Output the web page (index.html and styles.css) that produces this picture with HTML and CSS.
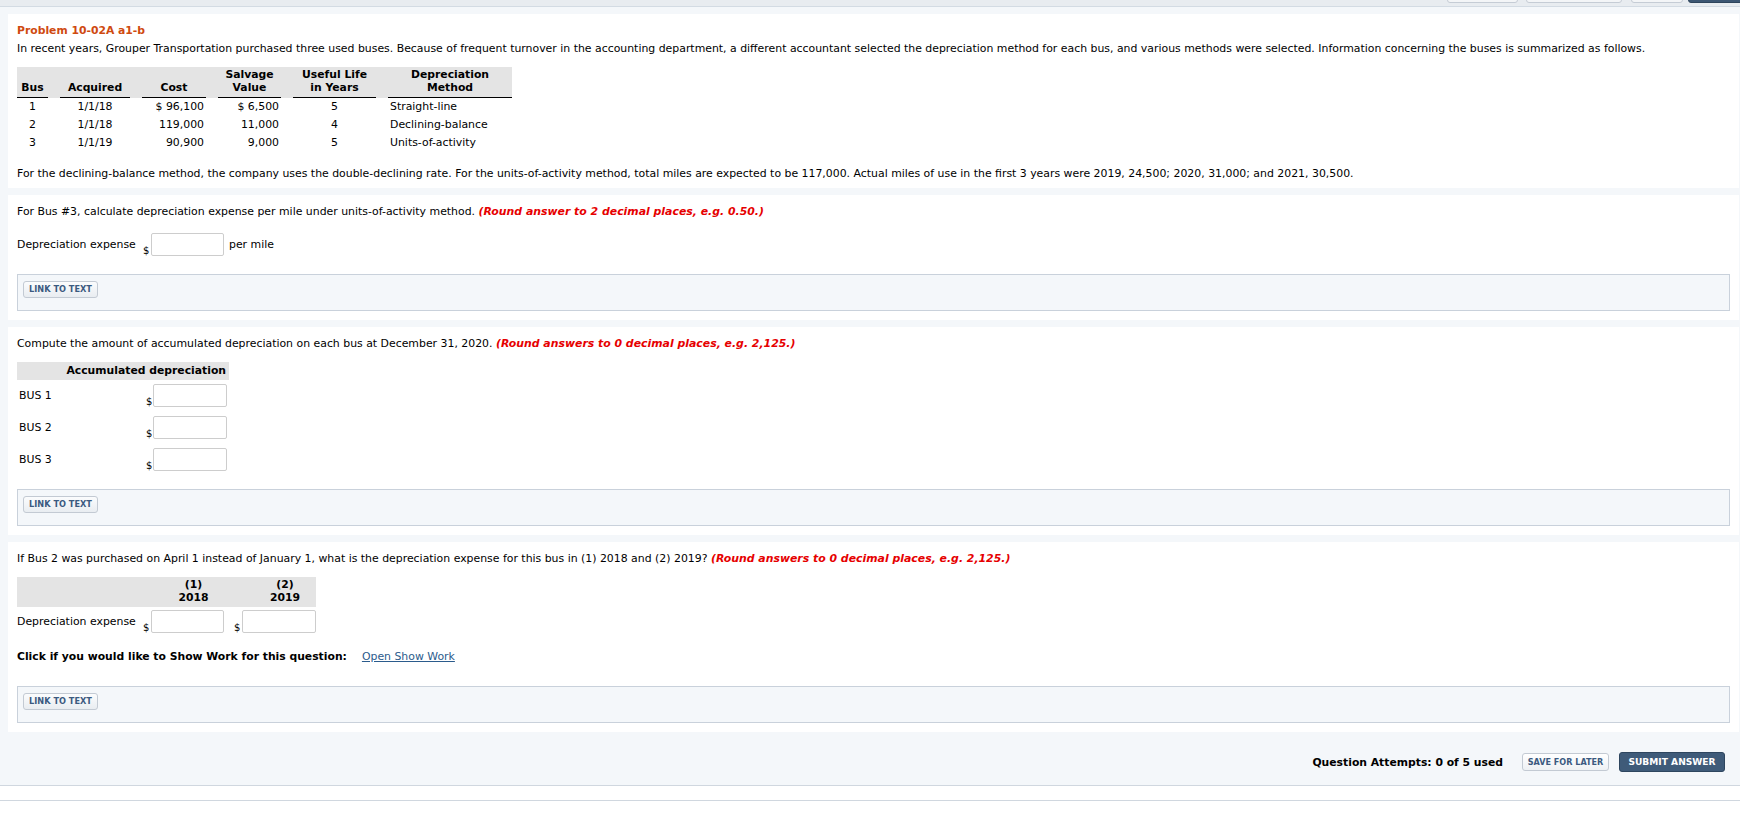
FILE: index.html
```html
<!DOCTYPE html>
<html>
<head>
<meta charset="utf-8">
<title>Problem 10-02A a1-b</title>
<link rel="stylesheet" href="styles.css">
</head>
<body>
<div class="topbar">
  <span class="tb tb1"></span><span class="tb tb2"></span><span class="tb tb3"></span><span class="tb tb4"></span>
</div>
<div class="page">
  <section class="panel p1">
    <div class="title">Problem 10-02A a1-b</div>
    <p class="intro">In recent years, Grouper Transportation purchased three used buses. Because of frequent turnover in the accounting department, a different accountant selected the depreciation method for each bus, and various methods were selected. Information concerning the buses is summarized as follows.</p>
    <div class="buses">
      <div class="bh">
        <div>Bus</div>
        <div>Acquired</div>
        <div>Cost</div>
        <div>Salvage<br>Value</div>
        <div>Useful Life<br>in Years</div>
        <div>Depreciation<br>Method</div>
      </div>
      <div class="br">
        <div class="c">1</div><div class="c">1/1/18</div><div class="r">$ 96,100</div><div class="r">$ 6,500</div><div class="c">5</div><div class="l">Straight-line</div>
      </div>
      <div class="br">
        <div class="c">2</div><div class="c">1/1/18</div><div class="r">119,000</div><div class="r">11,000</div><div class="c">4</div><div class="l">Declining-balance</div>
      </div>
      <div class="br">
        <div class="c">3</div><div class="c">1/1/19</div><div class="r">90,900</div><div class="r">9,000</div><div class="c">5</div><div class="l">Units-of-activity</div>
      </div>
    </div>
    <p class="note">For the declining-balance method, the company uses the double-declining rate. For the units-of-activity method, total miles are expected to be 117,000. Actual miles of use in the first 3 years were 2019, 24,500; 2020, 31,000; and 2021, 30,500.</p>
  </section>

  <section class="panel">
    <p class="q">For Bus #3, calculate depreciation expense per mile under units-of-activity method. <span class="red">(Round answer to 2 decimal places, e.g. 0.50.)</span></p>
    <div class="ansrow">
      <div class="lbl">Depreciation expense</div>
      <span class="cur">$</span><input class="box" type="text">
      <div class="after">per mile</div>
    </div>
    <div class="linkbox"><button class="ltt" type="button">LINK TO TEXT</button></div>
  </section>

  <section class="panel">
    <p class="q">Compute the amount of accumulated depreciation on each bus at December 31, 2020. <span class="red">(Round answers to 0 decimal places, e.g. 2,125.)</span></p>
    <div class="acc">
      <div class="acch">Accumulated depreciation</div>
      <div class="accrow first"><div class="acclbl">BUS 1</div><span class="cur c3">$</span><input class="box b3" type="text"></div>
      <div class="accrow"><div class="acclbl">BUS 2</div><span class="cur c3">$</span><input class="box b3" type="text"></div>
      <div class="accrow"><div class="acclbl">BUS 3</div><span class="cur c3">$</span><input class="box b3" type="text"></div>
    </div>
    <div class="linkbox"><button class="ltt" type="button">LINK TO TEXT</button></div>
  </section>

  <section class="panel p4">
    <p class="q">If Bus 2 was purchased on April 1 instead of January 1, what is the depreciation expense for this bus in (1) 2018 and (2) 2019? <span class="red">(Round answers to 0 decimal places, e.g. 2,125.)</span></p>
    <div class="de">
      <div class="deh">
        <div></div>
        <div>(1)<br>2018</div>
        <div>(2)<br>2019</div>
      </div>
      <div class="derow">
        <div class="lbl">Depreciation expense</div>
        <span class="cur">$</span><input class="box" type="text">
        <span class="cur c2">$</span><input class="box b2" type="text">
      </div>
    </div>
    <p class="show">Click if you would like to Show Work for this question:<a class="sw" href="#">Open Show Work</a></p>
    <div class="linkbox lb4"><button class="ltt" type="button">LINK TO TEXT</button></div>
  </section>

  <div class="footer">
    <span class="attempts">Question Attempts: 0 of 5 used</span>
    <button class="save" type="button">SAVE FOR LATER</button>
    <button class="submit" type="button">SUBMIT ANSWER</button>
  </div>
</div>
<div class="bottom"></div>
</body>
</html>
```
FILE: styles.css
```css
* { box-sizing: border-box; }
html, body { margin: 0; padding: 0; background: #fff; }
body {
  font-family: "DejaVu Sans", Verdana, sans-serif;
  font-size: 10.9px;
  line-height: 13px;
  color: #000;
}
p { margin: 0; }

.topbar {
  height: 7px;
  background: #e8ecf0;
  border-bottom: 1px solid #d3dbe3;
  overflow: hidden;
  display: flex;
  justify-content: flex-end;
}
.tb {
  flex: none;
  height: 20px;
  margin-top: -17px;
  border: 1px solid #c5ccd5;
  border-radius: 3px;
  background: #f3f5f7;
}
.tb1 { width: 71px; margin-right: 8px; }
.tb2 { width: 96px; margin-right: 9px; }
.tb3 { width: 52px; margin-right: 5px; }
.tb4 { width: 60px; margin-right: -8px; background: #3d5773; border-color: #2f455c; }

.page {
  background: #f4f7fa;
  padding: 7px 1px 0 8px;
  border-bottom: 1px solid #d0d7df;
}
.panel {
  background: #fff;
  padding: 10px 9px 9px;
  margin-bottom: 7px;
}
.p1 { padding-bottom: 8px; }
.p4 { margin-bottom: 0; }

.title { font-weight: bold; color: #cf4a10; font-size: 10.8px; }
.intro { margin-top: 5px; }

.buses { margin-top: 12px; width: 495px; }
.bh, .br {
  display: grid;
  grid-template-columns: 31px 70px 64px 63px 83px 124px;
  column-gap: 12px;
}
.bh {
  background: #e4e4e4;
  padding-top: 1px;
  font-weight: bold;
  font-size: 10.8px;
}
.bh > div {
  align-self: end;
  text-align: center;
  padding-bottom: 3px;
  border-bottom: 1px solid #000;
}
.br { line-height: 18px; }
.c { text-align: center; }
.r { text-align: right; padding-right: 2px; }
.l { padding-left: 2px; }
.note { margin-top: 15px; }

.red { color: #e60000; font-weight: bold; font-style: italic; }

.ansrow, .derow {
  display: flex;
  align-items: flex-start;
  height: 23px;
  margin-top: 15px;
}
.lbl { width: 126px; flex: none; padding-top: 5px; }
.cur {
  flex: none;
  width: 8px;
  font-size: 10px;
  line-height: 10px;
  align-self: flex-end;
}
.c2 { margin-left: 10px; }
.box {
  flex: none;
  width: 73px;
  height: 23px;
  margin: 0;
  padding: 0;
  border: 1px solid #cdcdcd;
  border-radius: 2px;
  background: #fff;
  font: inherit;
}
.b2 { width: 74px; }
.after { padding-top: 5px; margin-left: 5px; }

.linkbox {
  margin-top: 18px;
  border: 1px solid #c9d1db;
  background: #f4f7fa;
  padding: 6px 5px 12px;
}
.lb4 { margin-top: 23px; }
.ltt {
  display: block;
  width: 75px;
  height: 17px;
  margin: 0;
  padding: 0;
  border: 1px solid #c3cad3;
  border-radius: 3px;
  background: linear-gradient(#fbfcfd, #e9edf1);
  color: #3b5a80;
  font-family: "DejaVu Sans", Verdana, sans-serif;
  font-weight: bold;
  font-size: 8.2px;
  line-height: 15px;
  text-align: center;
}

.acc { margin-top: 12px; width: 212px; }
.acch {
  height: 18px;
  background: #e4e4e4;
  padding: 2px 3px 3px 0;
  text-align: right;
  font-weight: bold;
  font-size: 10.8px;
}
.accrow {
  display: flex;
  align-items: flex-start;
  height: 23px;
  margin-top: 9px;
}
.accrow.first { margin-top: 4px; }
.acclbl { width: 129px; flex: none; padding: 5px 0 0 2px; }
.c3 { width: 7px; }
.b3 { width: 74px; }

.de { margin-top: 12px; width: 299px; }
.deh {
  display: grid;
  grid-template-columns: 126px 81px 82px;
  column-gap: 10px;
  background: #e4e4e4;
  padding: 1px 0 3px;
  font-weight: bold;
  font-size: 10.8px;
  text-align: center;
}
.derow { margin-top: 3px; }

.show { margin-top: 17px; font-weight: bold; font-size: 10.8px; }
.sw { font-weight: normal; font-size: 10.9px; color: #2b5b8c; text-decoration: underline; margin-left: 15px; }

.footer {
  height: 53px;
  display: flex;
  justify-content: flex-end;
  align-items: center;
  padding: 20px 14px 13px 0;
}
.attempts { font-weight: bold; font-size: 10.8px; margin-right: 19px; }
.save, .submit {
  margin: 0;
  padding: 0;
  border-radius: 3px;
  font-family: "DejaVu Sans", Verdana, sans-serif;
  font-weight: bold;
  text-align: center;
}
.save {
  width: 87px;
  height: 18px;
  margin-right: 10px;
  border: 1px solid #c3cad3;
  background: linear-gradient(#ffffff, #eef1f4);
  color: #3b5a80;
  font-size: 8.1px;
  line-height: 16px;
}
.submit {
  width: 106px;
  height: 20px;
  border: 1px solid #2e465f;
  background: #3f5b79;
  color: #fff;
  font-size: 9.1px;
  line-height: 18px;
}

.bottom {
  height: 15px;
  border-bottom: 1px solid #d0d7df;
}
```
